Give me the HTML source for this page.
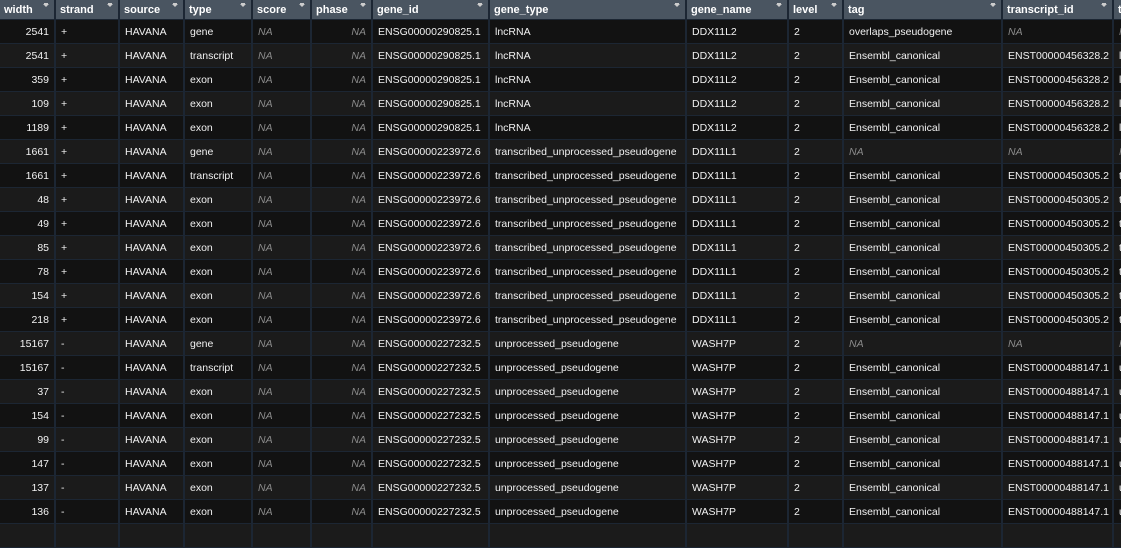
<!DOCTYPE html><html><head><style>
body{margin:0;background:#141414;width:1121px;height:531px;overflow:hidden;font-family:"Liberation Sans",sans-serif;font-size:10.5px;color:#f2f2f2}
table{border-collapse:collapse;table-layout:fixed;width:1140px}
th{background:#4a5561;color:#fff;font-weight:bold;text-align:left;height:19px;padding:0 4px;border-right:2px solid #1c2633;border-bottom:1px solid #1c2633;position:relative;white-space:nowrap;overflow:hidden;font-size:11px}
th:after{content:"";position:absolute;right:5px;top:4px;border-left:3px solid transparent;border-right:3px solid transparent;border-top:3px solid #ccc;box-shadow:0 -2px 0 -1px #ccc}
td{height:23px;padding:0 5px;border-right:2px solid #1c2633;border-bottom:1px solid #1c2633;white-space:nowrap;overflow:hidden}
tr:nth-child(odd) td{background:#121212}
tr:nth-child(even) td{background:#1b1b1b}
.r{text-align:right}.na{color:#8a8a8a;font-style:italic}
</style></head><body><table>
<colgroup><col style="width:55px"><col style="width:64px"><col style="width:65px"><col style="width:68px"><col style="width:59px"><col style="width:61px"><col style="width:117px"><col style="width:197px"><col style="width:102px"><col style="width:55px"><col style="width:159px"><col style="width:111px"><col style="width:27px"></colgroup>
<thead><tr><th>width</th><th>strand</th><th>source</th><th>type</th><th>score</th><th>phase</th><th>gene_id</th><th>gene_type</th><th>gene_name</th><th>level</th><th>tag</th><th>transcript_id</th><th>t</th></tr></thead>
<tbody id="b"></tbody></table>
<script>
var rows=[
["2541","+","gene","ENSG00000290825.1","lncRNA","DDX11L2","overlaps_pseudogene",null,null],
["2541","+","transcript","ENSG00000290825.1","lncRNA","DDX11L2","Ensembl_canonical","ENST00000456328.2","l"],
["359","+","exon","ENSG00000290825.1","lncRNA","DDX11L2","Ensembl_canonical","ENST00000456328.2","l"],
["109","+","exon","ENSG00000290825.1","lncRNA","DDX11L2","Ensembl_canonical","ENST00000456328.2","l"],
["1189","+","exon","ENSG00000290825.1","lncRNA","DDX11L2","Ensembl_canonical","ENST00000456328.2","l"],
["1661","+","gene","ENSG00000223972.6","transcribed_unprocessed_pseudogene","DDX11L1",null,null,null],
["1661","+","transcript","ENSG00000223972.6","transcribed_unprocessed_pseudogene","DDX11L1","Ensembl_canonical","ENST00000450305.2","t"],
["48","+","exon","ENSG00000223972.6","transcribed_unprocessed_pseudogene","DDX11L1","Ensembl_canonical","ENST00000450305.2","t"],
["49","+","exon","ENSG00000223972.6","transcribed_unprocessed_pseudogene","DDX11L1","Ensembl_canonical","ENST00000450305.2","t"],
["85","+","exon","ENSG00000223972.6","transcribed_unprocessed_pseudogene","DDX11L1","Ensembl_canonical","ENST00000450305.2","t"],
["78","+","exon","ENSG00000223972.6","transcribed_unprocessed_pseudogene","DDX11L1","Ensembl_canonical","ENST00000450305.2","t"],
["154","+","exon","ENSG00000223972.6","transcribed_unprocessed_pseudogene","DDX11L1","Ensembl_canonical","ENST00000450305.2","t"],
["218","+","exon","ENSG00000223972.6","transcribed_unprocessed_pseudogene","DDX11L1","Ensembl_canonical","ENST00000450305.2","t"],
["15167","-","gene","ENSG00000227232.5","unprocessed_pseudogene","WASH7P",null,null,null],
["15167","-","transcript","ENSG00000227232.5","unprocessed_pseudogene","WASH7P","Ensembl_canonical","ENST00000488147.1","u"],
["37","-","exon","ENSG00000227232.5","unprocessed_pseudogene","WASH7P","Ensembl_canonical","ENST00000488147.1","u"],
["154","-","exon","ENSG00000227232.5","unprocessed_pseudogene","WASH7P","Ensembl_canonical","ENST00000488147.1","u"],
["99","-","exon","ENSG00000227232.5","unprocessed_pseudogene","WASH7P","Ensembl_canonical","ENST00000488147.1","u"],
["147","-","exon","ENSG00000227232.5","unprocessed_pseudogene","WASH7P","Ensembl_canonical","ENST00000488147.1","u"],
["137","-","exon","ENSG00000227232.5","unprocessed_pseudogene","WASH7P","Ensembl_canonical","ENST00000488147.1","u"],
["136","-","exon","ENSG00000227232.5","unprocessed_pseudogene","WASH7P","Ensembl_canonical","ENST00000488147.1","u"],
["","","","","","","","",""]];
var h="";rows.forEach(function(r,i){var last=i==rows.length-1;function c(v){return v===null?'<td class="na">NA</td>':'<td>'+v+'</td>'}
h+='<tr><td class="r">'+r[0]+'</td><td>'+r[1]+'</td><td>'+(last?'':'HAVANA')+'</td><td>'+r[2]+'</td>'+(last?'<td></td><td></td>':'<td class="na">NA</td><td class="na r">NA</td>')+'<td>'+r[3]+'</td><td>'+r[4]+'</td><td>'+r[5]+'</td><td>'+(last?'':'2')+'</td>'+c(r[6])+c(r[7])+c(r[8])+'</tr>'});
document.getElementById("b").innerHTML=h;
</script></body></html>
